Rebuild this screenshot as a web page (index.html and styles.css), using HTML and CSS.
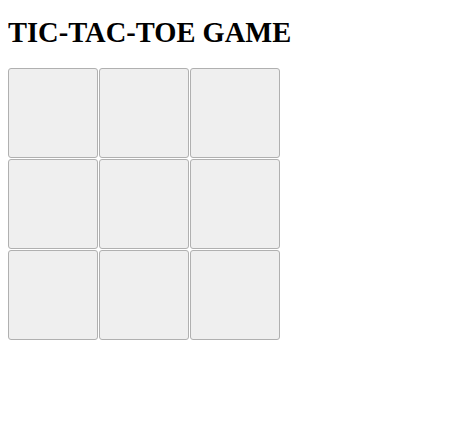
FILE: index.html
```html
<!DOCTYPE html>
<html>
<head>
<meta charset="utf-8">
<title>Tic-Tac-Toe</title>
<link rel="stylesheet" href="styles.css">
</head>
<body>
<h1 class="title">TIC-TAC-TOE GAME</h1>
<div class="board">
<button class="cell"></button>
<button class="cell"></button>
<button class="cell"></button>
<button class="cell"></button>
<button class="cell"></button>
<button class="cell"></button>
<button class="cell"></button>
<button class="cell"></button>
<button class="cell"></button>
</div>
</body>
</html>
```
FILE: styles.css
```css
body {
  margin: 8px;
  font-family: "Liberation Serif", "Times New Roman", serif;
}
.title {
  font-size: 28.5px;
  font-weight: bold;
  margin: 8.5px 0 19.5px;
  line-height: 32px;
}
.board {
  display: grid;
  grid-template-columns: repeat(3, 90px);
  grid-template-rows: repeat(3, 90px);
  gap: 1px;
}
.cell {
  width: 90px;
  height: 90px;
  margin: 0;
  padding: 0;
  background: #efefef;
  border: 1px solid #b0b0b0;
  border-radius: 3px;
}
```
